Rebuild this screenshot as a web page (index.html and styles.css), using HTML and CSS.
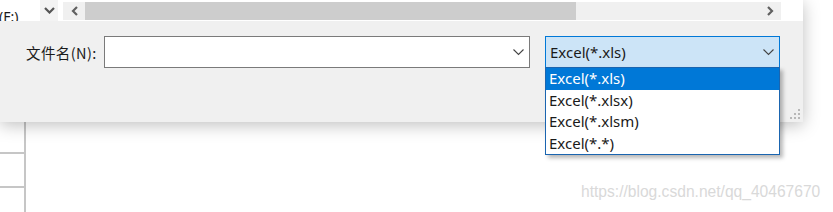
FILE: index.html
```html
<!DOCTYPE html>
<html lang="zh-CN">
<head>
<meta charset="utf-8">
<title>保存对话框</title>
<link rel="stylesheet" href="styles.css">
</head>
<body>
<div class="page">
  <div class="dialog">
    <div class="topstrip">
      <div class="navpane"><span class="navtext">(F:)</span></div>
      <div class="navdrop">
        <svg width="11" height="7" viewBox="0 0 11 7"><polyline points="1,1 5.5,5.5 10,1" fill="none" stroke="#555" stroke-width="2.2"/></svg>
      </div>
      <div class="hscroll">
        <div class="sbtn">
          <svg width="7" height="10" viewBox="0 0 7 10"><polyline points="6,1 2,5 6,9" fill="none" stroke="#606060" stroke-width="2.2"/></svg>
        </div>
        <div class="strack"><div class="sthumb"></div></div>
        <div class="sbtn">
          <svg width="7" height="10" viewBox="0 0 7 10"><polyline points="1,1 5,5 1,9" fill="none" stroke="#606060" stroke-width="2.2"/></svg>
        </div>
      </div>
      <div class="corner"></div>
    </div>
    <div class="row">
      <label class="label">文件名(N):</label>
      <div class="combo name">
        <span class="value"></span>
        <svg class="chev" width="11" height="7" viewBox="0 0 11 7"><polyline points="0.5,0.5 5.5,5.5 10.5,0.5" fill="none" stroke="#444" stroke-width="1.1"/></svg>
      </div>
      <div class="combo type">
        <span class="value">Excel(*.xls)</span>
        <svg class="chev" width="11" height="7" viewBox="0 0 11 7"><polyline points="0.5,0.5 5.5,5.5 10.5,0.5" fill="none" stroke="#444" stroke-width="1.1"/></svg>
      </div>
    </div>
    <div class="grip">
      <span></span><span></span><span></span><span></span><span></span><span></span>
    </div>
  </div>
  <div class="below">
    <div class="gridcol">
      <div class="cell c1"></div>
      <div class="cell c2"></div>
      <div class="cell c3"></div>
    </div>
  </div>
  <ul class="droplist">
    <li class="item sel">Excel(*.xls)</li>
    <li class="item">Excel(*.xlsx)</li>
    <li class="item">Excel(*.xlsm)</li>
    <li class="item">Excel(*.*)</li>
  </ul>
  <div class="watermark">https://blog.csdn.net/qq_40467670</div>
</div>
</body>
</html>
```
FILE: styles.css
```css
html, body {
  margin: 0;
  padding: 0;
  background: #ffffff;
}
body {
  width: 833px;
  height: 212px;
  overflow: hidden;
  font-family: "Noto Sans", "Noto Sans CJK SC", sans-serif;
}
.page {
  position: relative;
  width: 833px;
  height: 212px;
  overflow: hidden;
}
.dialog {
  position: relative;
  z-index: 1;
  width: 803px;
  height: 122px;
  background: #f0f0f0;
  box-shadow: 0 3px 16px rgba(0, 0, 0, 0.26);
  display: flex;
  flex-direction: column;
}
.topstrip {
  height: 21px;
  display: flex;
  background: #ffffff;
}
.navpane {
  width: 40px;
  overflow: hidden;
  position: relative;
}
.navtext {
  position: absolute;
  left: -1px;
  top: 8px;
  font-size: 14px;
  color: #1a1a1a;
  line-height: 18px;
}
.navdrop {
  width: 18px;
  background: #f3f3f3;
  display: flex;
  align-items: center;
  justify-content: center;
  padding-bottom: 1px;
}
.hscroll {
  margin-left: 5px;
  width: 718px;
  margin-top: 2px;
  height: 18px;
  background: #f0f0f0;
  display: flex;
  align-items: center;
}
.sbtn {
  width: 22px;
  height: 18px;
  display: flex;
  align-items: center;
  justify-content: center;
}
.strack {
  flex: 1;
  height: 18px;
  display: flex;
}
.sthumb {
  width: 491px;
  height: 18px;
  background: #cdcdcd;
}
.corner {
  width: 22px;
  background: #ffffff;
}
.row {
  display: flex;
  align-items: center;
  margin-top: 15px;
  height: 32px;
}
.label {
  box-sizing: border-box;
  width: 104px;
  padding-left: 26px;
  font-family: "Noto Sans CJK SC", sans-serif;
  font-size: 14.5px;
  color: #1a1a1a;
  letter-spacing: 0.4px;
}
.combo {
  box-sizing: border-box;
  height: 32px;
  display: flex;
  align-items: center;
  justify-content: space-between;
  padding: 0 5px 0 4px;
}
.combo.name {
  width: 426px;
  background: #ffffff;
  border: 1px solid #7a7a7a;
}
.combo.type {
  margin-left: 15px;
  width: 235px;
  background: #cce4f7;
  border: 1px solid #0078d7;
}
.value {
  font-size: 15px;
  color: #1a1a1a;
}
.chev {
  display: block;
}
.grip {
  position: absolute;
  right: 3px;
  bottom: 3px;
  width: 10px;
  height: 10px;
}
.grip span {
  position: absolute;
  width: 2px;
  height: 2px;
  background: #b8b8b8;
}
.grip span:nth-child(1) { right: 0; bottom: 8px; }
.grip span:nth-child(2) { right: 0; bottom: 4px; }
.grip span:nth-child(3) { right: 4px; bottom: 4px; }
.grip span:nth-child(4) { right: 0; bottom: 0; }
.grip span:nth-child(5) { right: 4px; bottom: 0; }
.grip span:nth-child(6) { right: 8px; bottom: 0; }
.below {
  display: flex;
}
.gridcol {
  width: 24px;
  border-right: 2px solid #c6c6c6;
  height: 90px;
}
.cell {
  box-sizing: border-box;
  border-bottom: 2px solid #c6c6c6;
}
.c1 { height: 32px; }
.c2 { height: 34px; }
.c3 { height: 40px; border-bottom: none; }
.droplist {
  position: absolute;
  z-index: 2;
  left: 545px;
  top: 67px;
  width: 235px;
  box-sizing: border-box;
  margin: 0;
  padding: 0;
  list-style: none;
  background: #ffffff;
  border: 1px solid #1a65b0;
  box-shadow: 3px 3px 4px rgba(0, 0, 0, 0.28);
}
.item {
  height: 21.5px;
  line-height: 21.5px;
  padding-left: 3px;
  font-size: 15px;
  color: #1a1a1a;
}
.item.sel {
  background: #0078d7;
  color: #ffffff;
}
.watermark {
  position: absolute;
  left: 581px;
  top: 183px;
  font-family: "Liberation Sans", Arial, sans-serif;
  font-size: 15.6px;
  color: #d9d9d9;
  white-space: nowrap;
}
```
